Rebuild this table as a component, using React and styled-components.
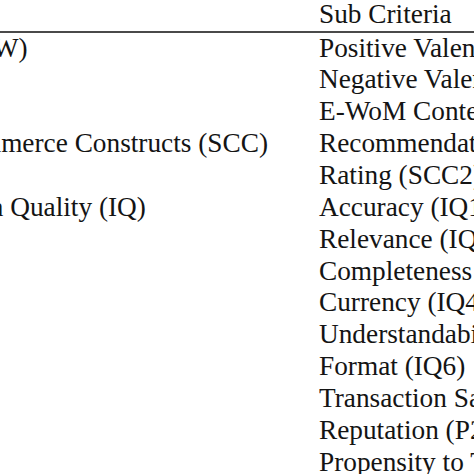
import React from 'react';
import styled, { createGlobalStyle } from 'styled-components';

const rows = [
  { criteria: 'E-WoM (EW)', sub: 'Positive Valence (EW1)' },
  { criteria: '', sub: 'Negative Valence (EW2)' },
  { criteria: '', sub: 'E-WoM Content (EW3)' },
  { criteria: 'Social Commerce Constructs (SCC)', sub: 'Recommendation (SCC1)' },
  { criteria: '', sub: 'Rating (SCC2)' },
  { criteria: 'Information Quality (IQ)', sub: 'Accuracy (IQ1)' },
  { criteria: '', sub: 'Relevance (IQ2)' },
  { criteria: '', sub: 'Completeness (IQ3)' },
  { criteria: '', sub: 'Currency (IQ4)' },
  { criteria: '', sub: 'Understandability (IQ5)' },
  { criteria: '', sub: 'Format (IQ6)' },
  { criteria: 'Trust (T)', sub: 'Transaction Safety (P1)' },
  { criteria: '', sub: 'Reputation (P2)' },
  { criteria: '', sub: 'Propensity to Trust (P3)' },
];

const App = () => {
  return (
    <>
      <GlobalStyle />
      <Frame>
        <Table>
          <HeaderRow>
            <Cell>Criteria</Cell>
            <Cell>Sub Criteria</Cell>
          </HeaderRow>
          {rows.map((row) => (
            <BodyRow key={row.sub}>
              <Cell>{row.criteria}</Cell>
              <Cell>{row.sub}</Cell>
            </BodyRow>
          ))}
        </Table>
      </Frame>
    </>
  );
};

export default App;

// Styled Components
const GlobalStyle = createGlobalStyle`
  html, body {
    margin: 0;
    padding: 0;
    background: #ffffff;
    overflow: hidden;
  }
`;

const Frame = styled.div`
  width: 474px;
  height: 474px;
  overflow: hidden;
  background: #ffffff;
`;

// the table is cropped: its first column begins left of the frame
const Table = styled.div`
  margin-left: -127px;
  width: 720px;
  font-family: 'Liberation Serif', 'Times New Roman', serif;
  font-size: 27.3px;
  color: #141414;
`;

const HeaderRow = styled.div`
  display: grid;
  grid-template-columns: 446px auto;
  line-height: 29.6px;
  padding-bottom: 1px;
  border-bottom: 2px solid #4a4a4a;
`;

const BodyRow = styled.div`
  display: grid;
  grid-template-columns: 446px auto;
  line-height: 30.4px;
  padding-bottom: 1.45px;
`;

const Cell = styled.div`
  white-space: nowrap;
`;
